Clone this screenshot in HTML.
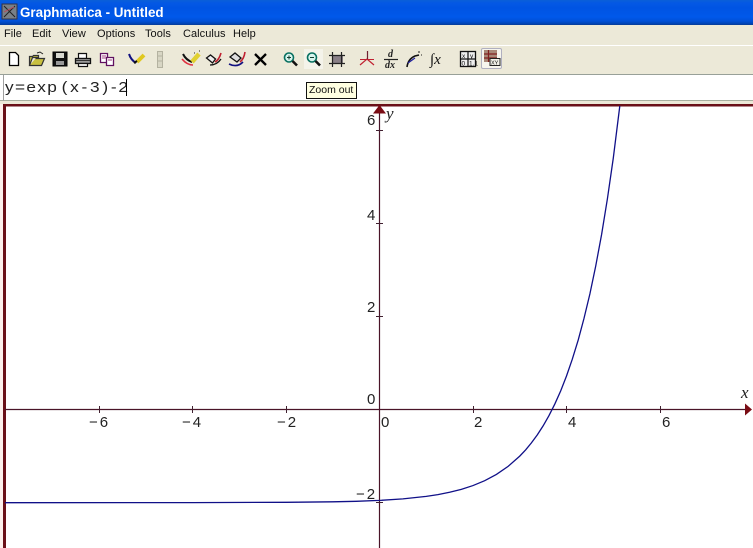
<!DOCTYPE html>
<html><head><meta charset="utf-8"><style>
html,body{margin:0;padding:0;background:#fff}
#r{position:relative;width:753px;height:548px;overflow:hidden;font-family:"Liberation Sans",sans-serif;background:#fff}
#r>div{position:absolute}
.m{top:28px;font-size:11px;color:#111;line-height:13px;letter-spacing:.05px}
.l{font-size:15px;color:#222;line-height:16px;white-space:pre}
.n{letter-spacing:2px}
svg{position:absolute;left:0;top:0}
</style></head><body><div id="r">
<div style="left:0;top:0;width:753px;height:25px;background:linear-gradient(#0a5fd8 0,#0458e4 3px,#0054e3 8px,#0058ea 17px,#0050d8 21px,#0042b0 24px,#0a3a90 25px)"></div>
<div style="left:20px;top:4px;font-size:13.4px;font-weight:bold;color:#fff;line-height:17px">Graphmatica - Untitled</div>
<div style="left:0;top:25px;width:753px;height:20px;background:#ece9d8"></div>
<div style="left:0;top:45px;width:753px;height:1px;background:#fff"></div>
<div style="left:0;top:46px;width:753px;height:28px;background:#ece9d8"></div>
<div style="left:0;top:74px;width:753px;height:1px;background:#98a098"></div>
<div class="m" style="left:4px">File</div><div class="m" style="left:32px">Edit</div><div class="m" style="left:62px">View</div><div class="m" style="left:97px">Options</div><div class="m" style="left:145px">Tools</div><div class="m" style="left:183px">Calculus</div><div class="m" style="left:233px">Help</div>
<div style="left:0;top:75px;width:753px;height:25px;background:#fff"></div>
<div style="left:0;top:100px;width:753px;height:1px;background:#a8b0a0"></div>
<div style="left:0;top:101px;width:753px;height:3px;background:#ece9d8"></div>
<div style="left:3px;top:75px;width:1px;height:26px;background:#a0a0a0"></div>
<div style="left:5px;top:79px;font-size:15px;line-height:18px;color:#222;letter-spacing:1.15px;white-space:pre;transform:scaleX(1.15);transform-origin:0 0"><span style="margin-right:3px">y=exp</span><span style="letter-spacing:2.4px">(x-3)</span><span style="letter-spacing:1.6px">-2</span></div>
<div style="left:126px;top:79px;width:1px;height:17px;background:#000"></div>
<div style="left:481px;top:48px;width:21px;height:21px;background:#f6f5ee;border:1px solid #b0b0c0;box-sizing:border-box;border-radius:2px"></div>
<div style="left:304px;top:49px;width:19px;height:20px;background:#f4f3ea"></div>

<svg width="753" height="548" viewBox="0 0 753 548">
<!-- title icon -->
<rect x="2" y="4" width="15" height="15" fill="#788088" stroke="#334" stroke-width="1"/><path d="M4 6L15 17M15 6L4 17" stroke="#222" fill="none"/><path d="M4 12L14 7" stroke="#b05060"/>
<!-- new -->
<path d="M9.500 52.500h6l3 3v10h-9z" fill="#fff" stroke="#000" stroke-width="1.300"/>
<!-- open -->
<path d="M29.500 65.500v-9h3l1-1h5v2h-6l-3 8h12l3-7h-9" fill="#c8c040" stroke="#333" stroke-width="1.200"/><path d="M37 53l3-1 3 2" fill="none" stroke="#222"/>
<!-- save -->
<rect x="53" y="52" width="14" height="14" fill="#111" stroke="#000"/><rect x="56" y="53" width="8" height="5" fill="#d8d8d0"/><rect x="56" y="61" width="8" height="4" fill="#999"/>
<!-- print -->
<path d="M78.500 53.500h8v5h-8z" fill="#fff" stroke="#111" stroke-width="1.200"/><path d="M75.500 58.500h15v5h-15z" fill="#999" stroke="#111" stroke-width="1.300"/><path d="M78.500 63.500h9v3h-9z" fill="#fff" stroke="#111" stroke-width="1.200"/><path d="M76 60.500h14" stroke="#333"/>
<!-- copy -->
<path d="M100.500 53.500h7v9h-7z" fill="#fff" stroke="#601060" stroke-width="1.300"/><path d="M106.500 57.500h7v8h-7z" fill="#fff" stroke="#601060" stroke-width="1.300"/><path d="M102 56h4M102 58h4M108 60h4" stroke="#a04080"/>
<!-- graph pencil -->
<path d="M129 54q2 6 7 9" fill="none" stroke="#101080" stroke-width="2"/><path d="M137 62l7-7" stroke="#e0c820" stroke-width="4"/><path d="M134 63l3-2" stroke="#111" stroke-width="2"/>
<!-- disabled -->
<path d="M157.500 51.500h5v16h-5zM157 56h6M157 61h6" fill="#d8d6c4" stroke="#b4b2a0"/>
<!-- 190 -->
<path d="M183 54q3 6 9 8" fill="none" stroke="#111" stroke-width="2"/><path d="M182 59q5 6 11 6" fill="none" stroke="#e03040" stroke-width="1.600"/><path d="M192 62l7-8" stroke="#e0d030" stroke-width="4.500"/><path d="M194 53h1M199 51h1" stroke="#222"/>
<!-- 213 -->
<path d="M206.500 58l4-3 5 4-3 4z" fill="#eee" stroke="#111" stroke-width="1.300"/><path d="M215 62q4-2 6-9" fill="none" stroke="#c02030" stroke-width="1.600"/><path d="M210 65q7 0 11-6" fill="none" stroke="#111" stroke-width="1.300"/>
<!-- 237 -->
<path d="M230 57l5-4 6 5-4 4z" fill="#ddd" stroke="#111" stroke-width="1.300"/><path d="M240 62q4-3 5-10" fill="none" stroke="#c02030" stroke-width="1.600"/><path d="M229 64q8 4 14-2" fill="none" stroke="#101080" stroke-width="1.600"/>
<!-- X -->
<path d="M255 54l11 11M266 54l-11 11" stroke="#000" stroke-width="2.300"/>
<!-- zoom in -->
<circle cx="289" cy="57.500" r="4.500" fill="#d8f4ee" stroke="#087060" stroke-width="1.600"/><path d="M292.500 61l4.500 4.500" stroke="#111" stroke-width="2.600"/><path d="M287 57.500h4M289 55.500v4" stroke="#104030"/>
<!-- zoom out -->
<circle cx="312" cy="57.500" r="4.500" fill="#d8f4ee" stroke="#087060" stroke-width="1.600"/><path d="M315.500 61l4.500 4.500" stroke="#111" stroke-width="2.600"/><path d="M310 57.500h4" stroke="#104030"/>
<!-- 337 -->
<rect x="332" y="55" width="11" height="9" fill="#8a8088"/><path d="M329 55.500h16M329 63.500h16M332.500 52v15M341.500 52v15" stroke="#222" fill="none" stroke-width="1.200"/>
<!-- 367 -->
<path d="M360 65l7-6 7 6" stroke="#c02030" fill="none" stroke-width="1.200"/><path d="M367.500 51v9" stroke="#702030" stroke-width="1.200"/><path d="M360 59.500h14" stroke="#c02030"/>
<!-- d/dx -->
<text x="388" y="57" font-family="Liberation Serif,serif" font-style="italic" font-weight="bold" font-size="10" fill="#222">d</text><path d="M384 59.500h14" stroke="#222" stroke-width="1.200"/><text x="385" y="68" font-family="Liberation Serif,serif" font-style="italic" font-weight="bold" font-size="10" fill="#222">dx</text>
<!-- tangent -->
<path d="M407 67q1-8 8-11l4-1" fill="none" stroke="#111" stroke-width="1.600"/><path d="M408 63l7-5" stroke="#2020a0" stroke-width="1.200"/><path d="M418 52h2M421 55h1" stroke="#222"/>
<!-- integral -->
<text x="430" y="64" font-family="Liberation Serif,serif" font-style="italic" font-size="15" fill="#111">∫x</text>
<!-- table -->
<rect x="460.500" y="51.500" width="15" height="15" fill="#eee" stroke="#111" stroke-width="1.300"/><path d="M468 52v14M461 59h14" stroke="#111" stroke-width="1.200"/>
<text x="462" y="58" font-family="Liberation Sans,sans-serif" font-size="6.500" fill="#111">x</text><text x="470" y="58" font-family="Liberation Sans,sans-serif" font-size="6.500" fill="#111">y</text>
<text x="461.500" y="65.500" font-family="Liberation Sans,sans-serif" font-size="6.500" fill="#111">0</text><text x="469" y="65.500" font-family="Liberation Sans,sans-serif" font-size="6.500" fill="#111">1.1</text>
<!-- grid xy -->
<rect x="484" y="50" width="13" height="12" fill="#a88878"/><path d="M484 54h13M484 58h13M488.500 50v12" stroke="#802020" stroke-width="1.200"/><rect x="490" y="58.500" width="10" height="7" fill="#f0f0e8" stroke="#222"/>
<text x="491" y="64.500" font-family="Liberation Sans,sans-serif" font-size="5.500" fill="#111">XY</text>

<!-- graph frame -->
<rect x="0" y="104" width="753" height="444" fill="#fff"/>
<rect x="0" y="104" width="3" height="444" fill="#fdf0ec"/>
<rect x="3" y="104" width="750" height="2.500" fill="#6a1018"/>
<rect x="3" y="104" width="3" height="444" fill="#6a1018"/>
<!-- axes -->
<path d="M5 409.500H748M379.500 112V548" stroke="#4a1428" fill="none" stroke-width="1.200"/>
<path d="M373 113.500L379.500 105L386 113.500z" fill="#7a0c14"/>
<path d="M745 403.500L752 409.500L745 415.500z" fill="#7a0c14"/>
<!-- ticks -->
<path d="M99.500 406v7M192.500 406v7M286.500 406v7M473.500 406v7M566.500 406v7M660.500 406v7M376 130.500h7M376 223.500h7M376 316.500h7M376 502.500h7" stroke="#402030" fill="none"/>
<!-- curve -->
<polyline fill="none" stroke="#101088" stroke-width="1.300" points="5,502.700 192.500,502.600 286,502.300 332.750,501.800 356.100,501.300 379.500,500.400 402.900,498.900 426.250,496.400 437.900,494.600 449.600,492.300 461.300,489.350 473,485.560 484.700,480.700 496.400,474.400 508.100,466.400 519.750,456.100 525.600,449.900 531.400,442.900 537.300,434.900 543.100,425.900 549,415.600 554.800,404.050 560.700,390.900 566.500,376 572.300,359.200 578.200,340.100 584,318.400 589.900,293.900 595.700,266.100 601.600,234.500 607.400,198.800 613.250,158.400 619.800,106"/>
</svg>

<div class="l n" style="left:89px;top:415px">−6</div>
<div class="l n" style="left:182px;top:415px">−4</div>
<div class="l n" style="left:277px;top:415px">−2</div>
<div class="l" style="left:381px;top:415px">0</div>
<div class="l" style="left:474px;top:415px">2</div>
<div class="l" style="left:568px;top:415px">4</div>
<div class="l" style="left:662px;top:415px">6</div>
<div class="l" style="left:367px;top:113px">6</div>
<div class="l" style="left:367px;top:208px">4</div>
<div class="l" style="left:367px;top:300px">2</div>
<div class="l" style="left:367px;top:392px">0</div>
<div class="l n" style="left:356px;top:487px">−2</div>
<div style="left:386px;top:105px;font:italic 17px/18px 'Liberation Serif',serif;color:#222">y</div>
<div style="left:741px;top:384px;font:italic 17px/18px 'Liberation Serif',serif;color:#222">x</div>
<div style="left:306px;top:82px;width:51px;height:17px;box-sizing:border-box;background:#ffffe1;border:1px solid #111;font-size:10.500px;line-height:15px;color:#111;padding-left:2px;white-space:nowrap">Zoom out</div>
</div></body></html>
